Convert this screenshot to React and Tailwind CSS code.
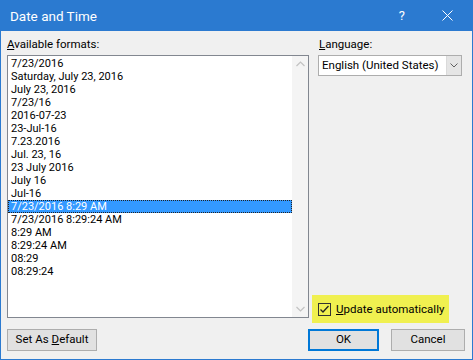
import React from "react";

const items = [
  "7/23/2016",
  "Saturday, July 23, 2016",
  "July 23, 2016",
  "7/23/16",
  "2016-07-23",
  "23-Jul-16",
  "7.23.2016",
  "Jul. 23, 16",
  "23 July 2016",
  "July 16",
  "Jul-16",
  "7/23/2016 8:29 AM",
  "7/23/2016 8:29:24 AM",
  "8:29 AM",
  "8:29:24 AM",
  "08:29",
  "08:29:24",
];

const font = { fontFamily: 'Roboto, "Noto Sans", sans-serif' };

export default function App() {
  return (
    <div
      className="w-[473px] h-[360px] bg-[#f0f0f0] border-x border-b border-[#2b7ad0] flex flex-col text-[11px] text-black whitespace-nowrap"
      style={font}
    >
      <div className="h-[31px] bg-[#2b7ad0] flex items-center pl-[9px] text-white shrink-0">
        <span className="leading-[16px] text-[13.5px]">Date and Time</span>
        <span className="ml-auto mr-[37px] text-[13px]">?</span>
        <svg width="11" height="11" viewBox="0 0 11 11" className="mr-[19px]">
          <path d="M0.5 0.5 L10.5 10.5 M10.5 0.5 L0.5 10.5" stroke="white" strokeWidth="1" />
        </svg>
      </div>
      <div className="flex-1 px-[6px] flex flex-col">
        <div className="flex items-start">
          <div className="w-[302px] flex flex-col">
            <div className="h-[24px] pt-[6px] leading-[15px] text-[11.5px]">
              <span className="underline">A</span>vailable formats:
            </div>
            <div className="h-[263px] border border-[#828790] bg-white flex">
              <div className="flex-1 pt-[1px] flex flex-col">
                {items.map((it, i) =>
                  i === 11 ? (
                    <div
                      key={i}
                      className="h-[13px] leading-[11px] bg-[#3399ff] text-white pl-[2px] border border-dotted border-[#222]"
                    >
                      {it}
                    </div>
                  ) : (
                    <div key={i} className="h-[13px] leading-[13px] pl-[3px]">
                      {it}
                    </div>
                  )
                )}
              </div>
              <div className="w-[16px] bg-[#f4f4f4] flex flex-col items-center justify-between py-[5px]">
                <svg width="9" height="6" viewBox="0 0 9 6">
                  <path d="M0.5 5 L4.5 1 L8.5 5" stroke="#c2c2c2" fill="none" strokeWidth="1.2" />
                </svg>
                <svg width="9" height="6" viewBox="0 0 9 6">
                  <path d="M0.5 1 L4.5 5 L8.5 1" stroke="#c2c2c2" fill="none" strokeWidth="1.2" />
                </svg>
              </div>
            </div>
          </div>
          <div className="ml-[3px] w-[150px] h-[292px] flex flex-col">
            <div className="h-[24px] pt-[6px] leading-[15px] pl-[7px] text-[11.5px]">
              <span className="underline">L</span>anguage:
            </div>
            <div className="ml-[6px] w-[144px] h-[21px] border border-[#adadad] bg-white flex">
              <div className="flex-1 pl-[3px] leading-[19px] text-[11.5px]">English (United States)</div>
              <div className="w-[15px] bg-[#e5e5e5] border-l border-[#dadada] flex items-center justify-center">
                <svg width="8" height="5" viewBox="0 0 8 5">
                  <path d="M0.5 0.5 L4 4 L7.5 0.5" stroke="#606060" fill="none" strokeWidth="1" />
                </svg>
              </div>
            </div>
            <div className="mt-auto w-[137px] h-[28px] bg-[#f0f050] flex items-center pl-[6px]">
              <div className="w-[13px] h-[13px] border border-[#333] flex items-center justify-center">
                <svg width="11" height="11" viewBox="0 0 11 11">
                  <path d="M1.5 5.5 L4 8 L9.5 2" stroke="#222" fill="none" strokeWidth="1.3" />
                </svg>
              </div>
              <span className="ml-[5px] leading-[15px] text-[11.5px]">
                <span className="underline">U</span>pdate automatically
              </span>
            </div>
          </div>
        </div>
        <div className="mt-[6px] flex text-[11.5px]">
          <div className="w-[90px] h-[22px] border border-[#adadad] bg-[#e1e1e1] flex items-center justify-center">
            Set As <span className="underline ml-[3px]">D</span>efault
          </div>
          <div className="ml-[211px] w-[71px] h-[22px] border-2 border-[#0078d7] bg-[#e1e1e1] flex items-center justify-center">
            OK
          </div>
          <div className="ml-[12px] w-[74px] h-[22px] border border-[#adadad] bg-[#e1e1e1] flex items-center justify-center">
            Cancel
          </div>
        </div>
      </div>
    </div>
  );
}
